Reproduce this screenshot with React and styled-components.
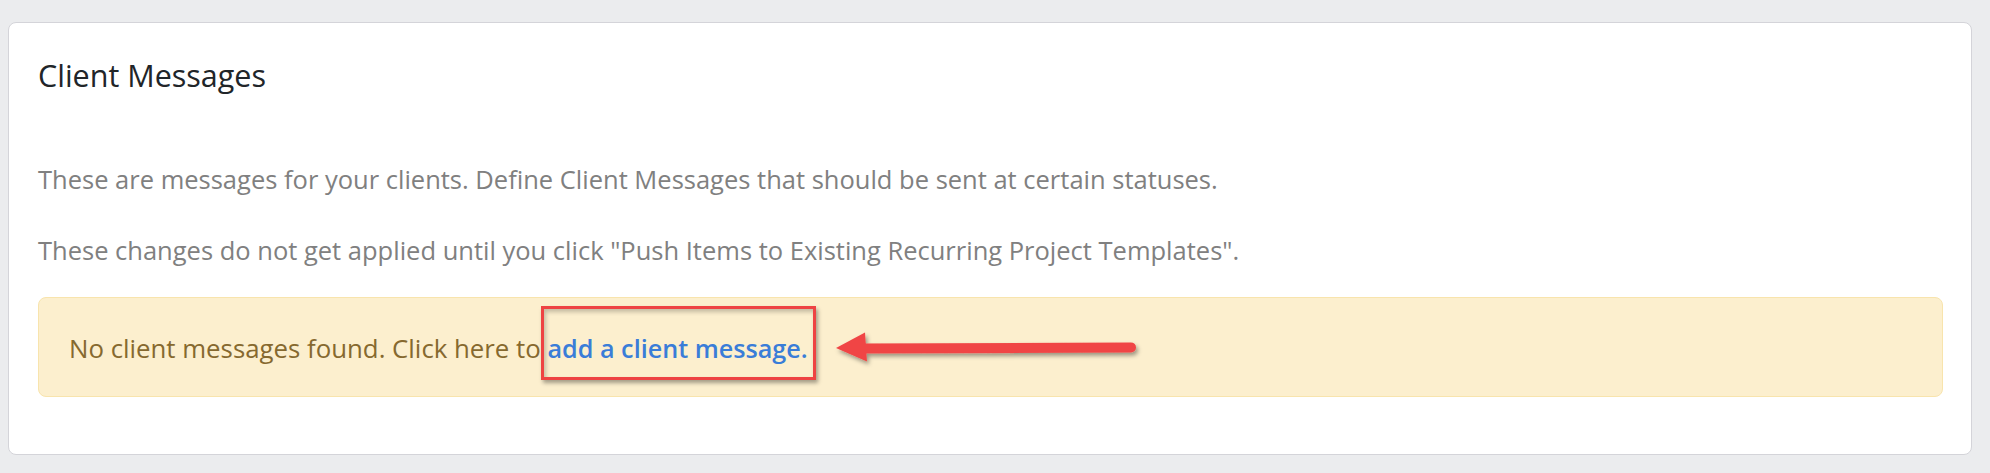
import React from "react";
import styled, { createGlobalStyle } from "styled-components";

const GlobalStyle = createGlobalStyle`
  html, body {
    margin: 0;
    background: #ebecee;
  }
  body {
    padding: 22px 18px 18px 8px;
    font-family: "Open Sans", "Noto Sans", sans-serif;
  }
`;

const Card = styled.section`
  background: #fff;
  border: 1px solid #d4d4d9;
  border-radius: 8px;
  padding: 34px 28px 57px 29px;
`;

const Title = styled.h2`
  margin: 0 0 66.4px;
  font-size: 30.5px;
  line-height: 36.6px;
  font-weight: 400;
  color: #212529;
`;

const Info = styled.p`
  margin: 0 0 ${(p) => (p.last ? "27.75px" : "32.75px")};
  font-size: 25.5px;
  line-height: 38.25px;
  color: #808080;
`;

const Alert = styled.div`
  background: #fcefce;
  border: 1px solid #f8e4ad;
  border-radius: 8px;
  padding: 30px 30px 28px;
  font-size: 25.8px;
  line-height: 40px;
  color: #86692f;
  white-space: nowrap;
`;

// red annotation box drawn around the link
const Highlight = styled.span`
  position: relative;

  &::after {
    content: "";
    position: absolute;
    top: -24px;
    bottom: -14px;
    left: -6px;
    right: -8px;
    border: 3px solid #ee4343;
    box-shadow: 2px 3px 4px rgba(0, 0, 0, 0.35), inset 2px 3px 4px rgba(0, 0, 0, 0.22);
    pointer-events: none;
  }
`;

const Link = styled.a`
  color: #3a7dd8;
  font-size: 25.2px;
  font-weight: 600;
  text-decoration: none;
  cursor: pointer;
`;

const Arrow = styled.svg`
  margin-left: 28px;
  vertical-align: -10.5px;
  overflow: visible;
`;

const PointerArrow = () => (
  <Arrow width="312" height="40" viewBox="0 0 312 40">
    <defs>
      <filter id="arrowShadow" x="-5%" y="-40%" width="110%" height="180%">
        <feDropShadow dx="2" dy="3" stdDeviation="2" floodColor="#000" floodOpacity="0.38" />
      </filter>
    </defs>
    <g filter="url(#arrowShadow)" fill="#f04545" stroke="#f04545">
      <line x1="24" y1="20.6" x2="295" y2="19.4" strokeWidth="10" strokeLinecap="round" />
      <polygon points="0,20 29,4.5 31,33.5" stroke="none" />
    </g>
  </Arrow>
);

export default function App() {
  return (
    <>
      <GlobalStyle />
      <Card>
        <Title>Client Messages</Title>
        <Info>
          These are messages for your clients. Define Client Messages that should be sent at certain statuses.
        </Info>
        <Info last>
          These changes do not get applied until you click "Push Items to Existing Recurring Project Templates".
        </Info>
        <Alert>
          No client messages found. Click here to{" "}
          <Highlight>
            <Link>add a client message.</Link>
          </Highlight>
          <PointerArrow />
        </Alert>
      </Card>
    </>
  );
}
